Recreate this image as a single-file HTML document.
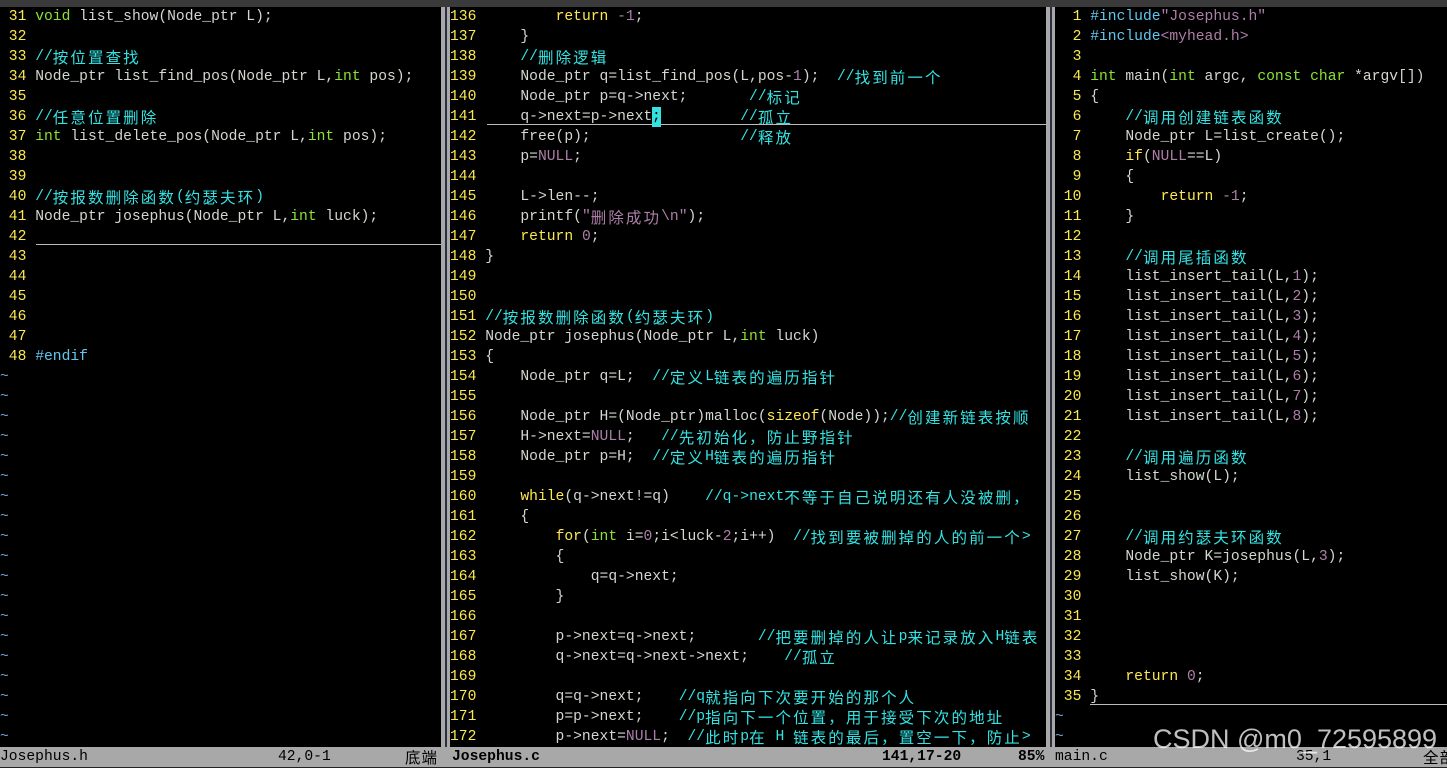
<!DOCTYPE html>
<html><head><meta charset="utf-8">
<style>
html,body{margin:0;padding:0;background:#000;width:1447px;height:768px;overflow:hidden}
body{position:relative;font-family:"Liberation Mono","Noto Sans CJK SC",monospace;font-size:14.67px;color:#d3d7cf}
.top{position:absolute;left:0;top:0;width:1447px;height:7px;background:#3a3a3a}
.pane{position:absolute;top:7px;height:740px;overflow:hidden;white-space:normal;line-height:20px}
.pane div{height:20px;white-space:pre;line-height:20px;overflow:hidden}
.n{color:#fce94f}
.k{color:#8ae234}
.y{color:#fce94f}
.m{color:#ad7fa8}
.c{color:#34e2e2}
.p{color:#5fc8f0}
.t{color:#729fcf}
i{font-style:normal;font-family:"Noto Sans CJK SC","WenQuanYi Zen Hei",sans-serif;font-size:15.5px;letter-spacing:2.1px;line-height:20px;vertical-align:top}
.sep{position:absolute;top:7px;height:740px;width:9px;background:#a8a8a8}
.sep:after{content:"";position:absolute;left:4px;top:0;width:2px;height:740px;background:#2a3040}
.ul{position:absolute;height:1px;background:#bbb}
.st{position:absolute;top:747px;height:20px;background:#a8a8a8;color:#000;line-height:20px;white-space:pre;overflow:hidden}
.st span{position:absolute;top:0}
.bot{position:absolute;left:0;top:767px;width:1447px;height:1px;background:#222}
.cur{position:absolute;left:652px;top:107px;width:9px;height:20px;background:#34e2e2;color:#000;line-height:20px}
.wm{position:absolute;left:1153px;top:724px;font-family:"Liberation Sans",sans-serif;font-size:27px;color:rgba(255,255,255,0.75);white-space:nowrap}
</style></head><body>
<div class="top"></div>

<div class="pane" style="left:0;width:441px">
<div><span class="n"> 31 </span><span class="k">void</span> list_show(Node_ptr L);</div>
<div><span class="n"> 32 </span></div>
<div><span class="n"> 33 </span><span class="c">//<i>按位置查找</i></span></div>
<div><span class="n"> 34 </span>Node_ptr list_find_pos(Node_ptr L,<span class="k">int</span> pos);</div>
<div><span class="n"> 35 </span></div>
<div><span class="n"> 36 </span><span class="c">//<i>任意位置删除</i></span></div>
<div><span class="n"> 37 </span><span class="k">int</span> list_delete_pos(Node_ptr L,<span class="k">int</span> pos);</div>
<div><span class="n"> 38 </span></div>
<div><span class="n"> 39 </span></div>
<div><span class="n"> 40 </span><span class="c">//<i>按报数删除函数</i>(<i>约瑟夫环</i>)</span></div>
<div><span class="n"> 41 </span>Node_ptr josephus(Node_ptr L,<span class="k">int</span> luck);</div>
<div><span class="n"> 42 </span></div>
<div><span class="n"> 43 </span></div>
<div><span class="n"> 44 </span></div>
<div><span class="n"> 45 </span></div>
<div><span class="n"> 46 </span></div>
<div><span class="n"> 47 </span></div>
<div><span class="n"> 48 </span><span class="p">#endif</span></div>
<div class="t">~</div><div class="t">~</div><div class="t">~</div><div class="t">~</div><div class="t">~</div><div class="t">~</div><div class="t">~</div><div class="t">~</div><div class="t">~</div><div class="t">~</div><div class="t">~</div><div class="t">~</div><div class="t">~</div><div class="t">~</div><div class="t">~</div><div class="t">~</div><div class="t">~</div><div class="t">~</div><div class="t">~</div>
</div>
<div class="ul" style="left:36px;top:244px;width:405px"></div>

<div class="sep" style="left:441px"></div>

<div class="pane" style="left:450px;width:596px">
<div><span class="n">136 </span>        <span class="y">return</span> <span class="m">-1</span>;</div>
<div><span class="n">137 </span>    }</div>
<div><span class="n">138 </span>    <span class="c">//<i>删除逻辑</i></span></div>
<div><span class="n">139 </span>    Node_ptr q=list_find_pos(L,pos-<span class="m">1</span>);  <span class="c">//<i>找到前一个</i></span></div>
<div><span class="n">140 </span>    Node_ptr p=q-&gt;next;       <span class="c">//<i>标记</i></span></div>
<div><span class="n">141 </span>    q-&gt;next=p-&gt;next;         <span class="c">//<i>孤立</i></span></div>
<div><span class="n">142 </span>    free(p);                 <span class="c">//<i>释放</i></span></div>
<div><span class="n">143 </span>    p=<span class="m">NULL</span>;</div>
<div><span class="n">144 </span></div>
<div><span class="n">145 </span>    L-&gt;len--;</div>
<div><span class="n">146 </span>    printf(<span class="m">"<i>删除成功</i>\n"</span>);</div>
<div><span class="n">147 </span>    <span class="y">return</span> <span class="m">0</span>;</div>
<div><span class="n">148 </span>}</div>
<div><span class="n">149 </span></div>
<div><span class="n">150 </span></div>
<div><span class="n">151 </span><span class="c">//<i>按报数删除函数</i>(<i>约瑟夫环</i>)</span></div>
<div><span class="n">152 </span>Node_ptr josephus(Node_ptr L,<span class="k">int</span> luck)</div>
<div><span class="n">153 </span>{</div>
<div><span class="n">154 </span>    Node_ptr q=L;  <span class="c">//<i>定义</i>L<i>链表的遍历指针</i></span></div>
<div><span class="n">155 </span></div>
<div><span class="n">156 </span>    Node_ptr H=(Node_ptr)malloc(<span class="y">sizeof</span>(Node));<span class="c">//<i>创建新链表按顺</i></span></div>
<div><span class="n">157 </span>    H-&gt;next=<span class="m">NULL</span>;   <span class="c">//<i>先初始化，防止野指针</i></span></div>
<div><span class="n">158 </span>    Node_ptr p=H;  <span class="c">//<i>定义</i>H<i>链表的遍历指针</i></span></div>
<div><span class="n">159 </span></div>
<div><span class="n">160 </span>    <span class="y">while</span>(q-&gt;next!=q)    <span class="c">//q-&gt;next<i>不等于自己说明还有人没被删，</i></span></div>
<div><span class="n">161 </span>    {</div>
<div><span class="n">162 </span>        <span class="y">for</span>(<span class="k">int</span> i=<span class="m">0</span>;i&lt;luck-<span class="m">2</span>;i++)  <span class="c">//<i>找到要被删掉的人的前一个</i>&gt;</span></div>
<div><span class="n">163 </span>        {</div>
<div><span class="n">164 </span>            q=q-&gt;next;</div>
<div><span class="n">165 </span>        }</div>
<div><span class="n">166 </span></div>
<div><span class="n">167 </span>        p-&gt;next=q-&gt;next;       <span class="c">//<i>把要删掉的人让</i>p<i>来记录放入</i>H<i>链表</i></span></div>
<div><span class="n">168 </span>        q-&gt;next=q-&gt;next-&gt;next;    <span class="c">//<i>孤立</i></span></div>
<div><span class="n">169 </span></div>
<div><span class="n">170 </span>        q=q-&gt;next;    <span class="c">//q<i>就指向下次要开始的那个人</i></span></div>
<div><span class="n">171 </span>        p=p-&gt;next;    <span class="c">//p<i>指向下一个位置，用于接受下次的地址</i></span></div>
<div><span class="n">172 </span>        p-&gt;next=<span class="m">NULL</span>;  <span class="c">//<i>此时</i>p<i>在</i> H <i>链表的最后，置空一下，防止</i>&gt;</span></div>
</div>
<div class="ul" style="left:487px;top:124px;width:559px"></div>
<div class="cur">;</div>

<div class="sep" style="left:1046px"></div>

<div class="pane" style="left:1055px;width:392px">
<div><span class="n">  1 </span><span class="p">#include</span><span class="m">"Josephus.h"</span></div>
<div><span class="n">  2 </span><span class="p">#include</span><span class="m">&lt;myhead.h&gt;</span></div>
<div><span class="n">  3 </span></div>
<div><span class="n">  4 </span><span class="k">int</span> main(<span class="k">int</span> argc, <span class="k">const</span> <span class="k">char</span> *argv[])</div>
<div><span class="n">  5 </span>{</div>
<div><span class="n">  6 </span>    <span class="c">//<i>调用创建链表函数</i></span></div>
<div><span class="n">  7 </span>    Node_ptr L=list_create();</div>
<div><span class="n">  8 </span>    <span class="y">if</span>(<span class="m">NULL</span>==L)</div>
<div><span class="n">  9 </span>    {</div>
<div><span class="n"> 10 </span>        <span class="y">return</span> <span class="m">-1</span>;</div>
<div><span class="n"> 11 </span>    }</div>
<div><span class="n"> 12 </span></div>
<div><span class="n"> 13 </span>    <span class="c">//<i>调用尾插函数</i></span></div>
<div><span class="n"> 14 </span>    list_insert_tail(L,<span class="m">1</span>);</div>
<div><span class="n"> 15 </span>    list_insert_tail(L,<span class="m">2</span>);</div>
<div><span class="n"> 16 </span>    list_insert_tail(L,<span class="m">3</span>);</div>
<div><span class="n"> 17 </span>    list_insert_tail(L,<span class="m">4</span>);</div>
<div><span class="n"> 18 </span>    list_insert_tail(L,<span class="m">5</span>);</div>
<div><span class="n"> 19 </span>    list_insert_tail(L,<span class="m">6</span>);</div>
<div><span class="n"> 20 </span>    list_insert_tail(L,<span class="m">7</span>);</div>
<div><span class="n"> 21 </span>    list_insert_tail(L,<span class="m">8</span>);</div>
<div><span class="n"> 22 </span></div>
<div><span class="n"> 23 </span>    <span class="c">//<i>调用遍历函数</i></span></div>
<div><span class="n"> 24 </span>    list_show(L);</div>
<div><span class="n"> 25 </span></div>
<div><span class="n"> 26 </span></div>
<div><span class="n"> 27 </span>    <span class="c">//<i>调用约瑟夫环函数</i></span></div>
<div><span class="n"> 28 </span>    Node_ptr K=josephus(L,<span class="m">3</span>);</div>
<div><span class="n"> 29 </span>    list_show(K);</div>
<div><span class="n"> 30 </span></div>
<div><span class="n"> 31 </span></div>
<div><span class="n"> 32 </span></div>
<div><span class="n"> 33 </span></div>
<div><span class="n"> 34 </span>    <span class="y">return</span> <span class="m">0</span>;</div>
<div><span class="n"> 35 </span>}</div>
<div class="t">~</div>
<div class="t">~</div>
</div>
<div class="ul" style="left:1090px;top:704px;width:357px"></div>

<div class="st" style="left:0;width:450px"><span style="left:0">Josephus.h</span><span style="left:278px">42,0-1</span><span style="left:405px"><i style="letter-spacing:1px">底端</i></span></div>
<div class="st" style="left:450px;width:605px;font-weight:bold"><span style="left:2px">Josephus.c</span><span style="left:432px">141,17-20</span><span style="left:568px">85%</span></div>
<div class="st" style="left:1055px;width:392px"><span style="left:0">main.c</span><span style="left:241px">35,1</span><span style="left:368px"><i style="letter-spacing:1px">全部</i></span></div>
<div class="bot"></div>
<div class="wm">CSDN @m0_72595899</div>
</body></html>
